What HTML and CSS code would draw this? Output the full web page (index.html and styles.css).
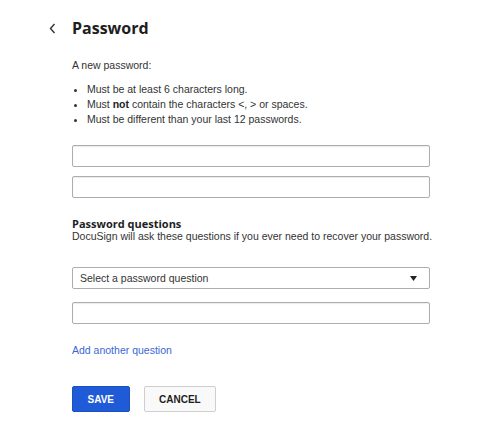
FILE: index.html
```html
<!DOCTYPE html>
<html>
<head>
<meta charset="utf-8">
<link rel="stylesheet" href="styles.css">
</head>
<body>
<div class="page">
  <header class="header">
    <a class="back" href="#" aria-label="Back">
      <svg width="7" height="11" viewBox="0 0 7 11"><path d="M5.5 1 L1.5 5.5 L5.5 10" fill="none" stroke="#333" stroke-width="1.4"/></svg>
    </a>
    <h1 class="title">Password</h1>
  </header>
  <main class="content">
    <p class="intro">A new password:</p>
    <ul class="rules">
      <li>Must be at least 6 characters long.</li>
      <li>Must <b>not</b> contain the characters &lt;, &gt; or spaces.</li>
      <li>Must be different than your last 12 passwords.</li>
    </ul>
    <div class="fields">
      <input class="field" type="password">
      <input class="field" type="password">
    </div>
    <h2 class="section-title">Password questions</h2>
    <p class="section-sub">DocuSign will ask these questions if you ever need to recover your password.</p>
    <div class="select">
      <span>Select a password question</span>
      <svg class="caret" width="7" height="5" viewBox="0 0 7 5"><path d="M0 0 H7 L3.5 5 Z" fill="#222"/></svg>
    </div>
    <input class="field answer" type="text">
    <a class="add-link" href="#">Add another question</a>
    <div class="actions">
      <button class="btn btn-primary">SAVE</button>
      <button class="btn btn-secondary">CANCEL</button>
    </div>
  </main>
</div>
</body>
</html>
```
FILE: styles.css
```css
html, body {
  margin: 0;
  padding: 0;
  background: #fff;
}
body {
  font-family: "Liberation Sans", Arial, sans-serif;
  color: #333;
  font-size: 10.5px;
}
.page {
  padding: 18px 0 0 47px;
  width: 383px;
}
.header {
  display: flex;
  align-items: center;
  height: 20px;
}
.back {
  display: flex;
  box-sizing: border-box;
  width: 25px;
  padding-left: 2px;
  align-items: center;
  padding-top: 1px;
}
.title {
  margin: 0;
  font-family: "Open Sans", sans-serif;
  font-weight: 700;
  font-size: 16px;
  line-height: 20px;
  color: #1e1e1e;
}
.content {
  padding-left: 25px;
}
.intro {
  margin: 20px 0 0;
  line-height: 15px;
}
.rules {
  margin: 9px 0 0;
  padding-left: 15px;
  line-height: 15px;
}
.rules b {
  color: #1e1e1e;
}
.fields {
  margin-top: 18px;
  display: flex;
  flex-direction: column;
  gap: 9px;
}
.field {
  display: block;
  box-sizing: border-box;
  width: 100%;
  height: 22px;
  margin: 0;
  border: 1px solid #adadad;
  border-radius: 2px;
  box-shadow: inset 0 1px 1px rgba(0,0,0,0.08);
  background: #fff;
  padding: 0 7px;
}
.section-title {
  margin: 20px 0 0;
  font-family: "Open Sans", sans-serif;
  font-weight: 700;
  font-size: 11px;
  line-height: 12px;
  color: #1e1e1e;
}
.section-sub {
  margin: 0;
  line-height: 12px;
  white-space: nowrap;
}
.select {
  margin-top: 25px;
  box-sizing: border-box;
  height: 22px;
  border: 1px solid #adadad;
  border-radius: 2px;
  display: flex;
  align-items: center;
  justify-content: space-between;
  padding: 0 12px 0 7px;
  color: #333;
}
.answer {
  margin-top: 13px;
}
.add-link {
  display: block;
  margin-top: 19px;
  line-height: 15px;
  color: #3c66d4;
  text-decoration: none;
}
.actions {
  margin-top: 28px;
  display: flex;
  gap: 14px;
}
.btn {
  height: 26px;
  padding: 0 14.5px;
  font-family: "Liberation Sans", Arial, sans-serif;
  font-weight: 700;
  font-size: 10px;
  border-radius: 2px;
  cursor: pointer;
}
.btn-primary {
  background: #1f5bd7;
  color: #fff;
  border: 1px solid #1a50c0;
}
.btn-secondary {
  background: #f9f9f9;
  color: #1e1e1e;
  border: 1px solid #cfcfcf;
}
```
